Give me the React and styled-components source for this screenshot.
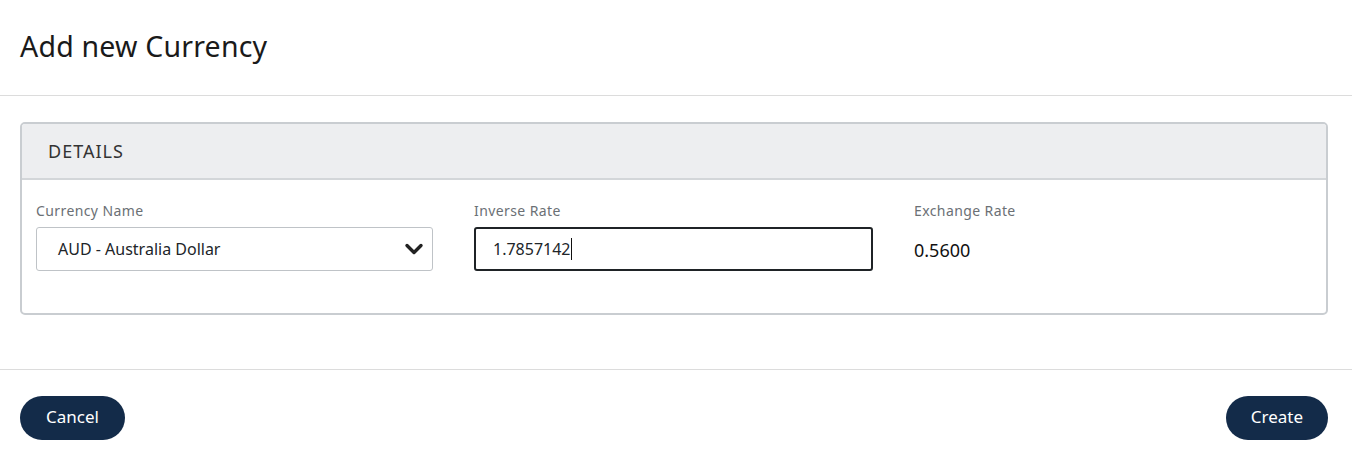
import React from "react";
import styled, { createGlobalStyle } from "styled-components";

const Global = createGlobalStyle`
  html, body { margin: 0; padding: 0; background: #fff; }
  body { font-family: "Noto Sans", "Open Sans", sans-serif; color: #212529; }
  * { box-sizing: border-box; }
`;

const Page = styled.div`
  width: 1352px;
  height: 466px;
  display: flex;
  flex-direction: column;
`;

const Header = styled.header`
  height: 96px;
  padding: 0 20px;
  display: flex;
  align-items: center;
  border-bottom: 1px solid #dcdcdc;
`;

const Title = styled.h1`
  margin: 0;
  margin-top: -4px;
  font-size: 28.5px;
  font-weight: 400;
  color: #1a1a1a;
  letter-spacing: 0.2px;
`;

const Body = styled.main`
  padding: 26px 24px 54px 20px;
  border-bottom: 1px solid #dcdcdc;
`;

const Card = styled.section`
  border: 2px solid #c9cdd1;
  border-radius: 5px;
  overflow: hidden;
`;

const CardHeader = styled.div`
  height: 56px;
  background: #edeef0;
  border-bottom: 2px solid #d3d6d9;
  display: flex;
  align-items: center;
  padding: 0 26px;
  font-size: 18px;
  color: #333;
  letter-spacing: 1px;
  text-transform: uppercase;
`;

const Grid = styled.div`
  display: grid;
  grid-template-columns: 397px 399px 1fr;
  column-gap: 41px;
  padding: 21px 13px 42px 14px;
`;

const Field = styled.div`
  display: flex;
  flex-direction: column;
`;

const Label = styled.label`
  font-size: 14px;
  color: #6b7075;
  letter-spacing: 0.4px;
  line-height: 20px;
  margin-bottom: 6px;
`;

const SelectBox = styled.div`
  height: 44px;
  border: 1px solid #bfc3c7;
  border-radius: 3px;
  display: flex;
  align-items: center;
  justify-content: space-between;
  padding: 0 8px 0 21px;
  font-size: 16px;
  color: #212529;
`;

const Input = styled.div`
  height: 44px;
  border: 2px solid #1f2326;
  border-radius: 3px;
  display: flex;
  align-items: center;
  padding: 0 17px;
  font-size: 16px;
  color: #212529;
`;

const Caret = styled.span`
  display: inline-block;
  width: 1.5px;
  height: 22px;
  background: #111;
`;

const Value = styled.div`
  height: 44px;
  display: flex;
  align-items: center;
  font-size: 18px;
  color: #111;
  padding-top: 2px;
`;

const Footer = styled.footer`
  display: flex;
  justify-content: space-between;
  padding: 26px 24px 0 20px;
`;

const Button = styled.button`
  height: 44px;
  padding: 0 ${(p) => p.$px || 26}px 4px;
  border: none;
  border-radius: 22px;
  background: #132b49;
  color: #fff;
  font-family: inherit;
  font-size: 17px;
  cursor: pointer;
`;

const Chevron = () => (
  <svg width="20" height="16" viewBox="0 0 20 16">
    <path d="M3 4.5 L10 11.5 L17 4.5" fill="none" stroke="#222" strokeWidth="3.4" strokeLinecap="round" strokeLinejoin="round" />
  </svg>
);

export default function App() {
  return (
    <Page>
      <Global />
      <Header>
        <Title>Add new Currency</Title>
      </Header>
      <Body>
        <Card>
          <CardHeader>Details</CardHeader>
          <Grid>
            <Field>
              <Label>Currency Name</Label>
              <SelectBox>
                <span>AUD - Australia Dollar</span>
                <Chevron />
              </SelectBox>
            </Field>
            <Field>
              <Label>Inverse Rate</Label>
              <Input>
                <span>1.7857142</span>
                <Caret />
              </Input>
            </Field>
            <Field>
              <Label>Exchange Rate</Label>
              <Value>0.5600</Value>
            </Field>
          </Grid>
        </Card>
      </Body>
      <Footer>
        <Button $px={26}>Cancel</Button>
        <Button $px={25}>Create</Button>
      </Footer>
    </Page>
  );
}
